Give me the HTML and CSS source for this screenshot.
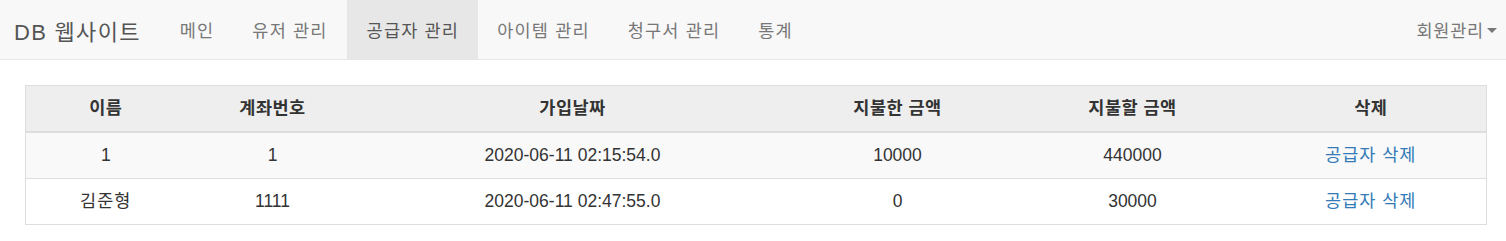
FILE: index.html
```html
<!DOCTYPE html>
<html lang="ko">
<head>
<meta charset="utf-8">
<title>DB 웹사이트</title>
<link rel="stylesheet" href="styles.css">
</head>
<body>
<nav class="navbar">
  <a class="brand" href="#">DB 웹사이트</a>
  <ul class="nav">
    <li><a href="#">메인</a></li>
    <li><a href="#">유저 관리</a></li>
    <li class="active"><a href="#">공급자 관리</a></li>
    <li><a href="#">아이템 관리</a></li>
    <li><a href="#">청구서 관리</a></li>
    <li><a href="#">통계</a></li>
  </ul>
  <div class="nav-right">
    <a href="#">회원관리<span class="caret"></span></a>
  </div>
</nav>
<main class="container">
  <table class="table">
    <colgroup>
      <col class="c1"><col class="c2"><col class="c3"><col class="c4"><col class="c5"><col class="c6">
    </colgroup>
    <thead>
      <tr><th>이름</th><th>계좌번호</th><th>가입날짜</th><th>지불한 금액</th><th>지불할 금액</th><th>삭제</th></tr>
    </thead>
    <tbody>
      <tr class="odd"><td>1</td><td>1</td><td>2020-06-11 02:15:54.0</td><td>10000</td><td>440000</td><td><a class="ko" href="#">공급자 삭제</a></td></tr>
      <tr><td class="ko">김준형</td><td>1111</td><td>2020-06-11 02:47:55.0</td><td>0</td><td>30000</td><td><a class="ko" href="#">공급자 삭제</a></td></tr>
    </tbody>
  </table>
</main>
</body>
</html>
```
FILE: styles.css
```css
html, body {
  margin: 0;
  padding: 0;
  background: #fff;
  font-family: "Liberation Sans", "Noto Sans CJK KR", sans-serif;
  color: #333;
}
a { text-decoration: none; }

.navbar {
  display: flex;
  align-items: stretch;
  background: #f8f8f8;
  border-bottom: 1px solid #e7e7e7;
  box-sizing: border-box;
  height: 60px;
}
.brand {
  display: flex;
  align-items: center;
  padding: 0 20px 0 14px;
  font-size: 22px;
  letter-spacing: 1.3px;
  color: #555;
}
.nav {
  display: flex;
  list-style: none;
  margin: 0;
  padding: 0;
}
.nav li a {
  display: flex;
  align-items: center;
  height: 100%;
  padding: 0 19px;
  font-size: 17.5px;
  letter-spacing: 1.2px;
  color: #777;
}
.nav li.active a {
  background: #e7e7e7;
  color: #555;
  padding: 0 19px 0 20px;
}
.nav-right {
  margin-left: auto;
  display: flex;
  align-items: center;
  padding-right: 9px;
}
.nav-right a {
  font-size: 17.5px;
  letter-spacing: 0.8px;
  color: #777;
  display: flex;
  align-items: center;
}
.caret {
  display: inline-block;
  width: 0;
  height: 0;
  margin-left: 3px;
  margin-top: 2px;
  border-top: 5px solid #777;
  border-left: 5px solid transparent;
  border-right: 5px solid transparent;
}

.container {
  padding: 25px 19px 0 25px;
}
.table {
  width: 100%;
  border-collapse: collapse;
  border: 1px solid #ddd;
  font-size: 17.5px;
}
.c1 { width: 160px; }
.c2 { width: 174px; }
.c3 { width: 426px; }
.c4 { width: 224px; }
.c5 { width: 246px; }
.table th, .table td {
  text-align: center;
  height: 45px;
  padding: 0 10px;
  border-top: 1px solid #ddd;
  line-height: 25px;
}
.table th {
  background: #eee;
  font-weight: bold;
  border-bottom: 2px solid #ddd;
  letter-spacing: 0.5px;
}
.table tr.odd td { background: #f9f9f9; }
.table td a { color: #337ab7; }
.table .ko { letter-spacing: 1px; }
```
